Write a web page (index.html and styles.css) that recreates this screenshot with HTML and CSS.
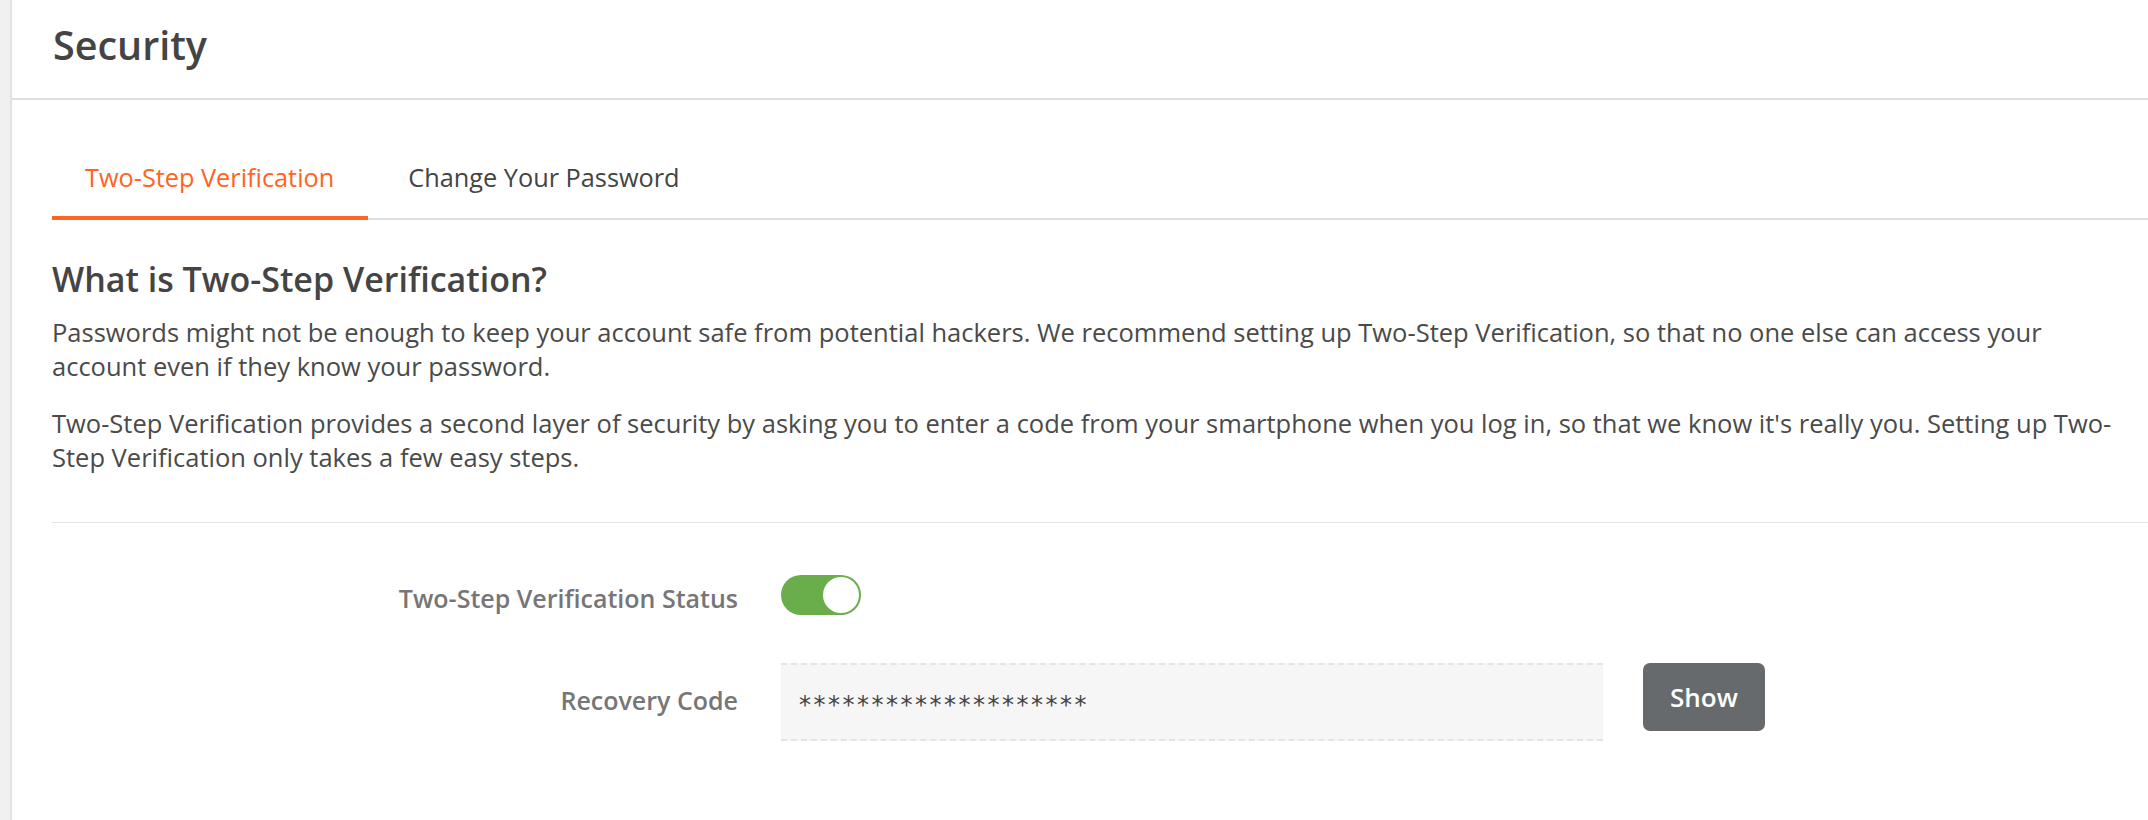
FILE: index.html
```html
<!DOCTYPE html>
<html lang="en">
<head>
<meta charset="utf-8">
<title>Security</title>
<link rel="stylesheet" href="styles.css">
</head>
<body>
<div class="page">
  <div class="edge"></div>
  <main class="main">
    <header class="header">
      <h1 class="title">Security</h1>
    </header>
    <section class="content">
      <nav class="tabs">
        <a class="tab tab-active">Two-Step Verification</a>
        <a class="tab">Change Your Password</a>
      </nav>
      <h2 class="heading">What is Two-Step Verification?</h2>
      <p class="text">Passwords might not be enough to keep your account safe from potential hackers. We recommend setting up Two-Step Verification, so that no one else can access your account even if they know your password.</p>
      <p class="text">Two-Step Verification provides a second layer of security by asking you to enter a code from your smartphone when you log in, so that we know it's really you. Setting up Two-Step Verification only takes a few easy steps.</p>
      <hr class="divider">
      <div class="form">
        <div class="row row-status">
          <div class="label">Two-Step Verification Status</div>
          <div class="control">
            <div class="toggle"><span class="knob"></span></div>
          </div>
        </div>
        <div class="row row-code">
          <div class="label">Recovery Code</div>
          <div class="control">
            <div class="code-field">********************</div>
            <button class="btn">Show</button>
          </div>
        </div>
      </div>
    </section>
  </main>
</div>
</body>
</html>
```
FILE: styles.css
```css
* { box-sizing: border-box; }
html, body { margin: 0; padding: 0; background: #fff; }
body {
  font-family: "Open Sans", "Noto Sans", "Liberation Sans", sans-serif;
  color: #4a4a4a;
}
.page {
  display: flex;
  min-height: 820px;
}
.edge {
  width: 12px;
  flex: 0 0 12px;
  background: #f0f0f0;
  border-right: 2px solid #e2e2e2;
}
.main {
  flex: 1;
  min-width: 0;
}
.header {
  height: 100px;
  border-bottom: 2px solid #dedede;
  display: flex;
  align-items: center;
  padding: 0 0 6px 41px;
}
.title {
  margin: 0;
  font-size: 39.5px;
  font-weight: 600;
  line-height: 1;
  color: #444;
}
.content {
  padding: 0 24px 0 40px;
}
.tabs {
  margin-top: 61px;
  display: flex;
  gap: 7px;
  border-bottom: 2px solid #dedede;
  margin-right: -24px;
}
.tab {
  display: block;
  padding: 0 34px 22px 33px;
  font-size: 25.3px;
  line-height: 33px;
  color: #444;
  margin-bottom: -2px;
  border-bottom: 4px solid transparent;
}
.tab-active {
  color: #ff6422;
  border-bottom-color: #ff6422;
  border-radius: 3px 3px 0 0;
}
.heading {
  margin: 39px 0 0;
  font-size: 34px;
  line-height: 40px;
  font-weight: 600;
  color: #444;
}
.text {
  margin: 17px 0 0;
  font-size: 25.5px;
  line-height: 33.5px;
}
.text + .text {
  margin-top: 24px;
}
.divider {
  margin: 48px -24px 0 0;
  border: 0;
  border-top: 1px solid #e3e3e3;
  height: 0;
}
.form {
  padding-top: 52px;
  display: flex;
  flex-direction: column;
  gap: 48px;
}
.row {
  display: grid;
  grid-template-columns: 686px 1fr;
  column-gap: 43px;
  align-items: center;
}
.label {
  text-align: right;
  font-size: 25px;
  font-weight: 600;
  color: #767676;
}
.row-status .label {
  padding-top: 5px;
}
.row-code .label {
  padding-bottom: 5px;
}
.control {
  display: flex;
  align-items: flex-start;
  gap: 40px;
}
.toggle {
  width: 80px;
  height: 40px;
  border-radius: 20px;
  background: #6aad4b;
  padding: 2px;
  display: flex;
  justify-content: flex-end;
}
.knob {
  width: 36px;
  height: 36px;
  border-radius: 50%;
  background: #fff;
}
.code-field {
  width: 822px;
  height: 78px;
  background: #f6f6f6;
  border-top: 2px dashed #e4e4e4;
  border-bottom: 2px dashed #e4e4e4;
  padding: 5px 18px 0;
  display: flex;
  align-items: center;
  font-family: "DejaVu Sans", sans-serif;
  font-size: 24px;
  color: #444;
  letter-spacing: 2.5px;
}
.btn {
  width: 122px;
  height: 68px;
  border: 0;
  border-radius: 7px;
  background: #666a6d;
  color: #fff;
  font-family: "Open Sans", "Noto Sans", sans-serif;
  font-size: 26px;
  font-weight: 600;
  padding: 0;
}
```
